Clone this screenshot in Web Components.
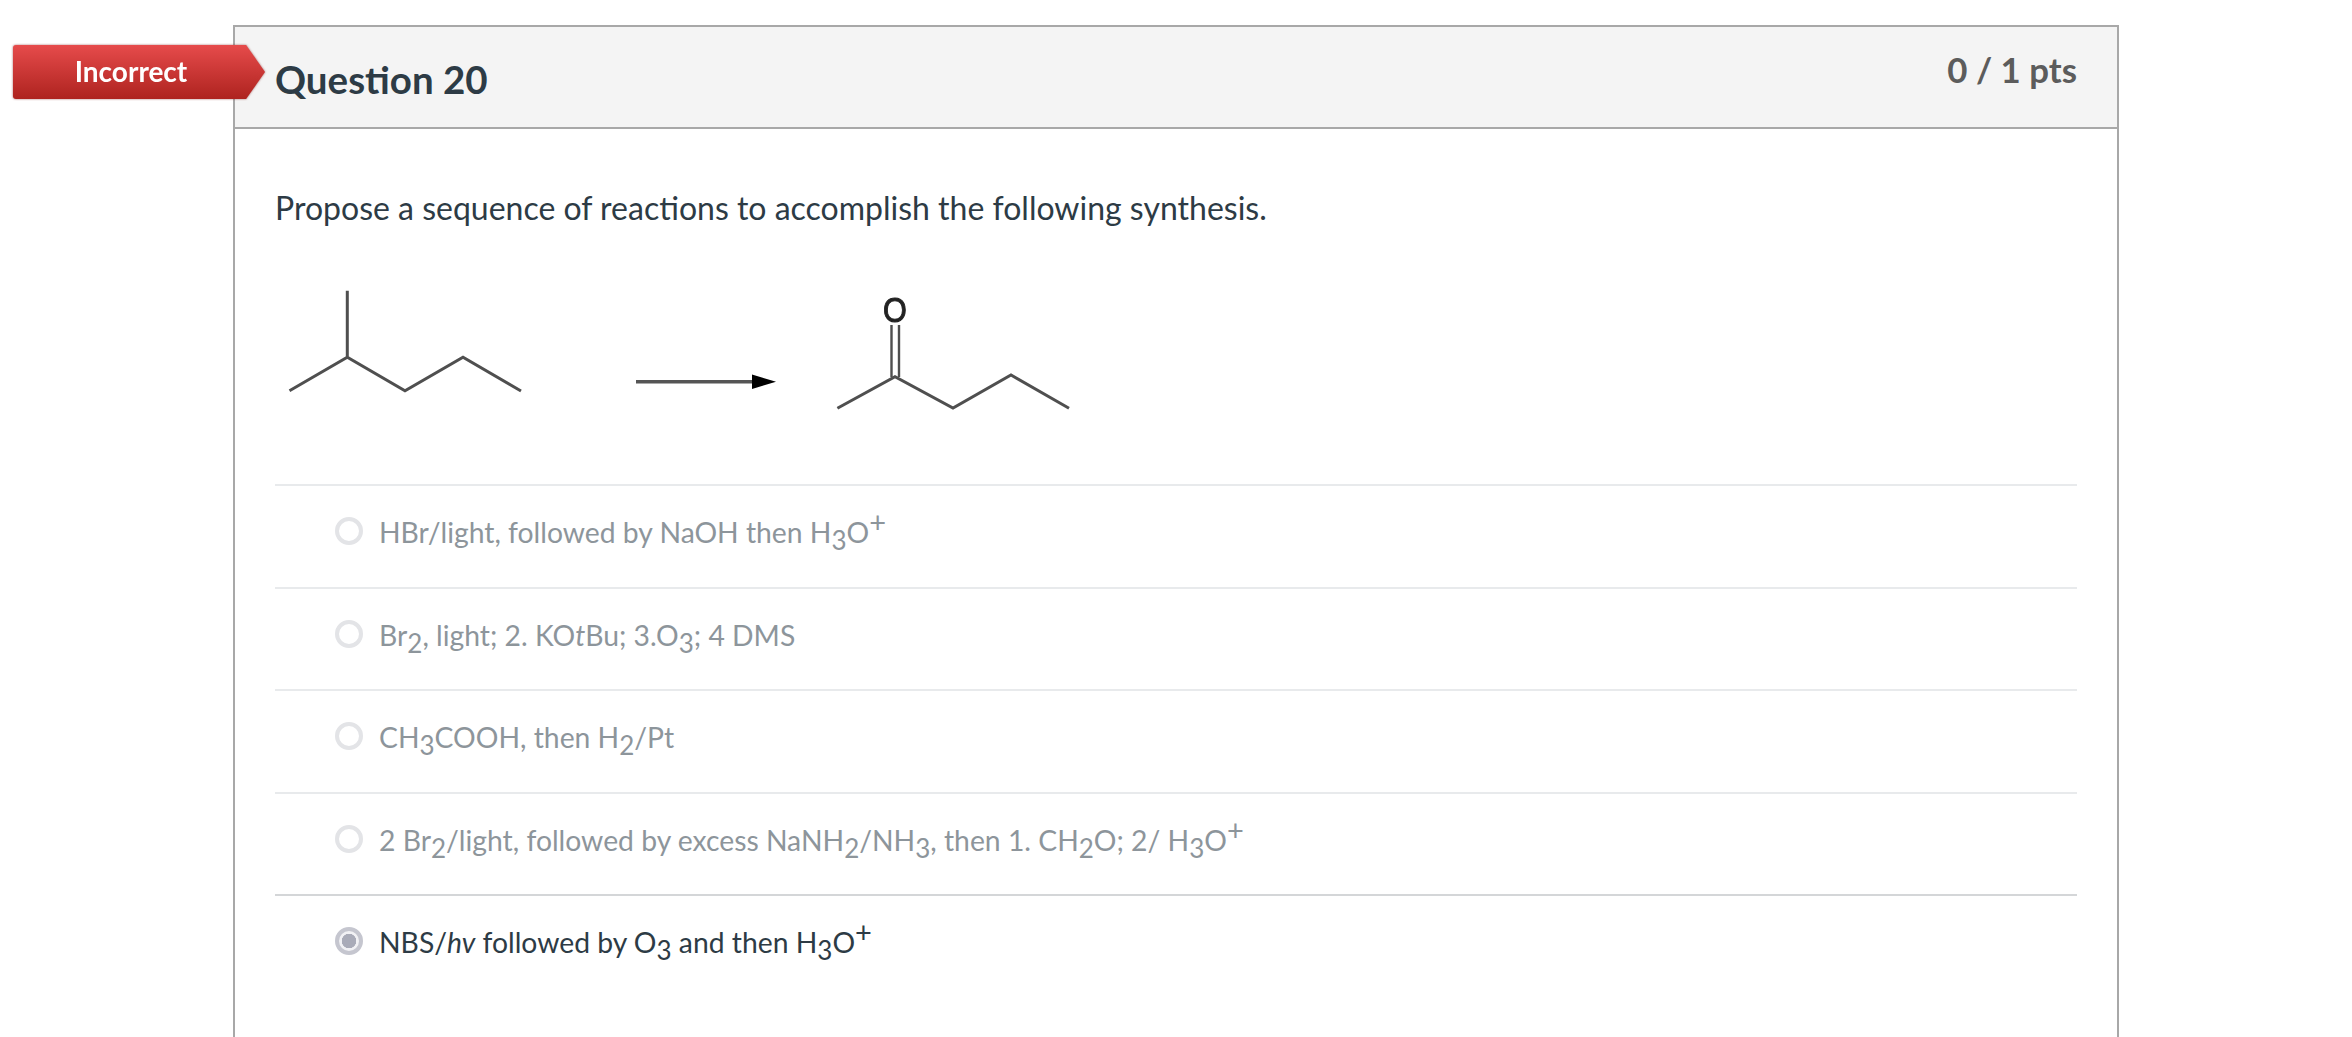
<!DOCTYPE html>
<html>
<head>
<meta charset="utf-8">
<title>Question 20</title>
<style>
  html, body { margin: 0; height: 100%; overflow: hidden; background: #fff; }
  body { font-family: Lato, "Open Sans", sans-serif; color: #2d3b45; }
</style>
</head>
<body>
<quiz-question heading="Question 20" points="0 / 1 pts" status="Incorrect">
  <div>Propose a sequence of reactions to accomplish the following synthesis.</div>
  <synthesis-figure></synthesis-figure>
  <answer-option>HBr/light, followed by NaOH then H<sub>3</sub>O<sup>+</sup></answer-option>
  <answer-option>Br<sub>2</sub>, light; 2. KO<i>t</i>Bu; 3.O<sub>3</sub>; 4 DMS</answer-option>
  <answer-option>CH<sub>3</sub>COOH, then H<sub>2</sub>/Pt</answer-option>
  <answer-option>2 Br<sub>2</sub>/light, followed by excess NaNH<sub>2</sub>/NH<sub>3</sub>, then 1. CH<sub>2</sub>O; 2/ H<sub>3</sub>O<sup>+</sup></answer-option>
  <answer-option selected>NBS/<i>hv</i> followed by O<sub>3</sub> and then H<sub>3</sub>O<sup>+</sup></answer-option>
</quiz-question>

<script>
class StatusBadge extends HTMLElement {
  constructor() {
    super();
    this.attachShadow({ mode: 'open' });
    this.shadowRoot.innerHTML = `
      <style>
        :host {
          display: block;
          width: 252px;
          height: 54px;
          filter: drop-shadow(0 0 1px rgba(120, 20, 20, .6));
        }
        .flag {
          box-sizing: border-box;
          height: 100%;
          padding: 0 16px 3px 0;
          display: flex;
          align-items: center;
          justify-content: center;
          background: linear-gradient(#e64b4b, #ae231f);
          border-radius: 3px 0 0 3px;
          clip-path: polygon(0 0, 92.500% 0, 100% 50%, 92.500% 100%, 0 100%);
          color: #fff;
          font-size: 28px;
          font-weight: 700;
        }
      </style>
      <div class="flag"><slot></slot></div>
    `;
  }
}

class QuizQuestion extends HTMLElement {
  constructor() {
    super();
    this.attachShadow({ mode: 'open' });
    this.shadowRoot.innerHTML = `
      <style>
        :host {
          display: block;
          position: relative;
          padding: 25px 0 0 233px;
        }
        status-badge { position: absolute; left: 13px; top: 45px; z-index: 1; }
        .card {
          width: 1886px;
          min-height: 1100px;
          box-sizing: border-box;
          border: 2px solid #a8a8a8;
        }
        header {
          height: 102px;
          box-sizing: border-box;
          padding: 0 40px;
          display: flex;
          justify-content: space-between;
          background: #f4f4f4;
          border-bottom: 2px solid #a8a8a8;
        }
        h2 {
          margin: 28px 0 0;
          font-size: 38.500px;
          line-height: 48px;
          font-weight: 700;
        }
        .pts {
          margin-top: 23px;
          font-size: 34.800px;
          line-height: 40px;
          font-weight: 700;
          color: #5c5c5c;
        }
        .body {
          padding: 55px 40px 0;
          font-size: 32px;
          line-height: 48px;
        }
      </style>
      <status-badge></status-badge>
      <div class="card">
        <header><h2></h2><div class="pts"></div></header>
        <div class="body"><slot></slot></div>
      </div>
    `;
    this.shadowRoot.querySelector('status-badge').textContent = this.getAttribute('status');
    this.shadowRoot.querySelector('h2').textContent = this.getAttribute('heading');
    this.shadowRoot.querySelector('.pts').textContent = this.getAttribute('points');
  }
}

class SynthesisFigure extends HTMLElement {
  constructor() {
    super();
    this.attachShadow({ mode: 'open' });
    // the reference figure is a scaled up bitmap, hence the slight blur
    this.shadowRoot.innerHTML = `
      <style>
        :host { display: block; height: 252px; }
        svg { display: block; filter: blur(.6px); }
        text { font-family: "Liberation Sans", sans-serif; font-size: 36px; fill: #222; }
      </style>
      <svg width="800" height="252" viewBox="275 232 800 252" fill="none" stroke="#4f4f4f" stroke-width="3">
        <path d="M347.300 290.700V357.300M289.500 390.700L347.300 357.300L405 390.700L463 357.300L521 391"/>
        <path d="M636 381.700H756" stroke-width="3.500" stroke="#555"/>
        <path d="M752 374.500L776 381.700L752 389Z" fill="#000" stroke="none"/>
        <path d="M837.400 408.300L895 376.700L953 408L1011 375L1069 408.300"/>
        <path d="M891.500 325V377M899 325V377" stroke-width="2.400"/>
        <text transform="translate(895 322) scale(.85 1)" text-anchor="middle" stroke="#222" stroke-width="1">O</text>
      </svg>
    `;
  }
}

class AnswerOption extends HTMLElement {
  constructor() {
    super();
    this.attachShadow({ mode: 'open' });
    this.shadowRoot.innerHTML = `
      <style>
        :host {
          display: flex;
          align-items: center;
          box-sizing: border-box;
          height: 102.500px;
          padding: 0 0 10px 60px;
          border-top: 2px solid #e8eaec;
          color: #8d959b;
          font-size: 28.300px;
          line-height: 40px;
        }
        :host([selected]) { color: #2d3b45; border-top-color: #d4d6d8; }
        .radio {
          flex: none;
          width: 28px;
          height: 28px;
          margin: 0 16px 0 0;
          border: 4px solid #e3e4e7;
          box-sizing: border-box;
          border-radius: 50%;
          background: #fff;
        }
        :host([selected]) .radio {
          border-color: #c5c6cf;
          background: radial-gradient(circle, #a9abb8 0 7px, #f1f1f4 7.5px);
        }
        .label { margin-top: 2px; }
        ::slotted(sub), ::slotted(sup) { line-height: 0; }
        ::slotted(sub) { font-size: 26px; vertical-align: -7px; }
        ::slotted(sup) { font-size: 29px; vertical-align: 10px; }
      </style>
      <span class="radio"></span>
      <span class="label"><slot></slot></span>
    `;
  }
}

customElements.define('status-badge', StatusBadge);
customElements.define('quiz-question', QuizQuestion);
customElements.define('synthesis-figure', SynthesisFigure);
customElements.define('answer-option', AnswerOption);
</script>
</body>
</html>
